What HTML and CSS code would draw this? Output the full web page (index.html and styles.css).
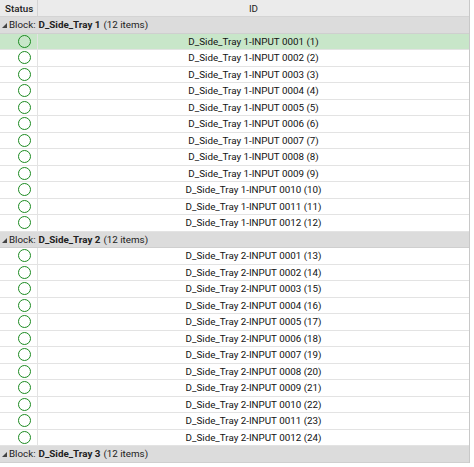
FILE: index.html
```html
<!DOCTYPE html>
<html>
<head>
<meta charset="utf-8">
<link rel="stylesheet" href="styles.css">
</head>
<body>
<div class="grid">
  <div class="head">
    <div class="c-status">Status</div>
    <div class="c-id">ID</div>
  </div>
  <div id="body"></div>
</div>
<script src="app.js"></script>
</body>
</html>
```
FILE: styles.css
```css
* { box-sizing: border-box; }
body {
  margin: 0;
  background: #fff;
  font-family: Roboto, "Noto Sans", sans-serif;
  font-size: 9.8px;
  color: #111;
}
.grid {
  width: 470px;
  border-right: 1px solid #c8c8c8;
}
.head {
  display: flex;
  height: 17px;
  background: #ebebeb;
  border-bottom: 1px solid #d4d4d4;
  color: #222;
}
.head .c-status {
  width: 38px;
  padding-left: 5px;
  font-weight: 500;
  border-right: 1px solid #d4d4d4;
  display: flex;
  align-items: center;
}
.head .c-id {
  flex: 1;
  display: flex;
  align-items: center;
  justify-content: center;
}
.block {
  display: flex;
  align-items: center;
  height: 16.5px;
  background: #dcdcdc;
  border-bottom: 1px solid #cfcfcf;
  padding-left: 2px;
  color: #222;
}
.block .tri {
  width: 0; height: 0;
  border-left: 5px solid transparent;
  border-bottom: 5px solid #444;
  margin-right: 2px;
  margin-top: 2px;
}
.block b { font-weight: 700; margin: 0 3px; }
.row {
  display: flex;
  height: 16.5px;
  border-bottom: 1px solid #e3e3e3;
  background: #fff;
}
.row.sel { background: #c8e6c9; }
.row .c-status {
  width: 38px;
  border-right: 1px solid #e3e3e3;
  display: flex;
  align-items: center;
  padding-left: 18px;
}
.row .c-id {
  flex: 1;
  display: flex;
  align-items: center;
  justify-content: center;
}
.ring {
  width: 13px; height: 13px;
  border: 1.8px solid #1b8a20;
  border-radius: 50%;
}
```
FILE: app.js
```js
const body = document.getElementById('body');
let n = 0;
for (let b = 1; b <= 3; b++) {
  const blk = document.createElement('div');
  blk.className = 'block';
  blk.innerHTML = '<span class="tri"></span>Block:<b>D_Side_Tray ' + b + '</b>(12 items)';
  body.appendChild(blk);
  if (b === 3) break;
  for (let i = 1; i <= 12; i++) {
    n++;
    const r = document.createElement('div');
    r.className = 'row' + (n === 1 ? ' sel' : '');
    r.innerHTML = '<div class="c-status"><span class="ring"></span></div><div class="c-id">D_Side_Tray ' + b + '-INPUT ' + String(i).padStart(4, '0') + ' (' + n + ')</div>';
    body.appendChild(r);
  }
}
```
